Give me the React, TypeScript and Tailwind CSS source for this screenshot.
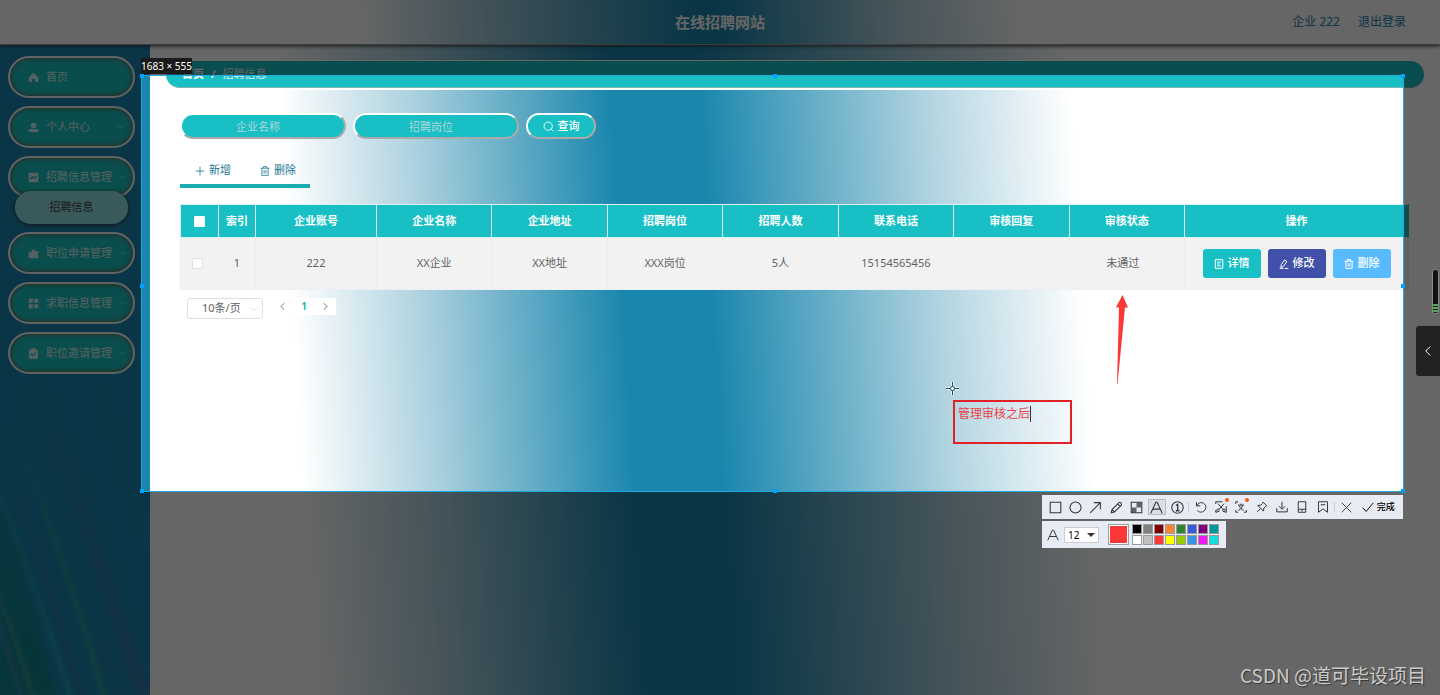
import { useState, type ReactNode } from 'react'

const FONT = "font-['Noto_Sans','Noto_Sans_CJK_SC',sans-serif]"

const icons: Record<string, ReactNode> = {
  home: <path d="M8 1 1 7.500V14.500h5V10h4v4.500h5v-7z" fill="currentColor" />,
  user: (
    <g fill="currentColor">
      <circle cx="8" cy="5" r="4" />
      <path d="M1 14.500v-2.200C1 10.500 2.500 10 4 10h8c1.500 0 3 .5 3 2.300v2.200z" />
    </g>
  ),
  chart: (
    <g>
      <rect x="1" y="1" width="14" height="14" rx="1" fill="currentColor" />
      <path d="m3.500 10 3-3 2.500 2 3.500-3.500" fill="none" stroke="#18a5a5" strokeWidth="1.500" />
    </g>
  ),
  puzzle: <path d="M1 6h4c0-2 1-4 3.500-4S11 3 10.500 5L15 4v4.500c-2 0-2 2.500 0 2.500v4H1z" fill="currentColor" />,
  grid: <path d="M1 1h6v6H1zM9 1h6v6H9zM1 9h6v6H1zM9 9h6v6H9z" fill="currentColor" />,
  claim: (
    <g>
      <path d="M1.500 2.500H5V.5h6v2h3.500v13h-13z" fill="currentColor" />
      <path d="m4.500 8.500 2.500 2.500 4.500-4.500" fill="none" stroke="#18a5a5" strokeWidth="1.500" />
    </g>
  ),
  down: <path d="m2 5 6 6 6-6" />,
  left: <path d="M11 2 5 8l6 6" />,
  right: <path d="m5 2 6 6-6 6" />,
  plus: <path d="M8 1v14M1 8h14" />,
  trash: <path d="M1 3.500h14M5.500 3.500V1h5v2.500M3 3.500V15h10V3.500M6.500 6.500V12M9.500 6.500V12" />,
  search: (
    <g>
      <circle cx="7.500" cy="7.500" r="6" />
      <path d="m12 12 3 3" />
    </g>
  ),
  doc: <path d="M2 1h12v14H2zM5 5h6M5 8h4M5 11h6" />,
  edit: <path d="M9 1.500 12.500 4 7 12l-4 1.500.5-4.500zM1 15h6M9 15h6" />,
  square: <path d="M1.500 1.500h13v13h-13z" />,
  circle: <circle cx="8" cy="8" r="6.800" />,
  arrow: <path d="M1.500 14.500 14 2M6 2h8v8" />,
  pencil: <path d="m1.500 14.500 1-4L11 2q1.500-1 2.500.5t.5 2.500L5.500 13.500zM9.500 3.500l3 3M2.500 10.500l3 3" />,
  mosaic: (
    <g>
      <path d="M1.500 1.500h13v13h-13z" />
      <path d="M8 2h6v6H8zM2 8h6v6H2z" fill="currentColor" stroke="none" opacity=".75" />
    </g>
  ),
  letter: <path d="M1 15 7.200 1.500h1.600L15 15M3.800 10h8.400" />,
  number: (
    <g>
      <circle cx="8" cy="8" r="7" />
      <path d="M6 5.500 8.200 4.200V12M6 12h4.500" strokeWidth="1.600" />
    </g>
  ),
  undo: <path d="M2 1.500v5h5M2.500 6.500C5-.5 14.500 1.500 14.500 8.500c0 6-8 8.500-11.500 4" />,
  cut: (
    <g>
      <path d="M1 4V1h9M1 12v3h2M13 15h2V7M4 3.500l7 8M12 3.500l-7 8" />
      <circle cx="4" cy="12.500" r="1.700" />
      <circle cx="12" cy="12.500" r="1.700" />
    </g>
  ),
  translate: <path d="M1 4V1h3M1 12v3h3M15 12v3h-3M4 5.500h8M8 3.500v2M4.500 12.500c4-2 5-4 5.500-7M6 6.500c.5 3 3 5 5.500 6" />,
  pin: <path d="m9.500 1.500 5 5-1.500.5-2.500 2.500-.5 4-7.500-7.500 4-.5L9 3zM6 10l-4.500 4.500" />,
  download: <path d="M8 1v9.500M4 7l4 4 4-4M1 9.500v5h14v-5" />,
  phone: <path d="M3 1h10v14H3zM3 11h10M7 13h2" />,
  bookmark: <path d="M2 1h12v14l-6-4.500L2 15zM5 5h6" />,
  close: <path d="m1 1 14 14M15 1 1 15" />,
  check: <path d="m1 9 4.500 5L15 2.500" />,
}

const solidIcons = ['home', 'user', 'chart', 'puzzle', 'grid', 'claim']

function Icon({ name, className = 'size-[11px]', width = 1.3 }: { name: string; className?: string; width?: number }) {
  return (
    <svg
      viewBox="0 0 16 16"
      className={`shrink-0 ${className}`}
      fill="none"
      stroke={solidIcons.includes(name) ? 'none' : 'currentColor'}
      strokeWidth={width}
      aria-hidden="true"
    >
      {icons[name]}
    </svg>
  )
}

const menu = [
  { icon: 'home', label: '首页' },
  { icon: 'user', label: '个人中心', more: true },
  { icon: 'chart', label: '招聘信息管理', more: true, child: '招聘信息' },
  { icon: 'puzzle', label: '职位申请管理', more: true },
  { icon: 'grid', label: '求职信息管理', more: true },
  { icon: 'claim', label: '职位邀请管理', more: true },
]

const columns = ['企业账号', '企业名称', '企业地址', '招聘岗位', '招聘人数', '联系电话', '审核回复', '审核状态']
const row = ['222', 'XX企业', 'XX地址', 'XXX岗位', '5人', '15154565456', '', '未通过']

const actions = [
  { icon: 'doc', label: '详情', color: 'bg-[#18c0c5]' },
  { icon: 'edit', label: '修改', color: 'bg-[#4150a8]' },
  { icon: 'trash', label: '删除', color: 'bg-[#58bbff]' },
]

const drawTools = ['square', 'circle', 'arrow', 'pencil', 'mosaic', 'letter', 'number']
const captureTools = ['undo', 'cut', 'translate', 'pin', 'download', 'phone', 'bookmark']

const swatches = [
  'bg-[#000000]', 'bg-[#808080]', 'bg-[#800000]', 'bg-[#f78837]', 'bg-[#2f8432]', 'bg-[#385bd3]', 'bg-[#800080]', 'bg-[#009899]',
  'bg-[#ffffff]', 'bg-[#c0c0c0]', 'bg-[#fb3838]', 'bg-[#ffff00]', 'bg-[#99cc00]', 'bg-[#3794e4]', 'bg-[#f31bf3]', 'bg-[#16dcdc]',
]

const handles = [
  '-left-0.5 -top-0.5', 'left-1/2 -top-0.5', '-right-0.5 -top-0.5',
  '-left-0.5 top-1/2', '-right-0.5 top-1/2',
  '-left-0.5 -bottom-0.5', 'left-1/2 -bottom-0.5', '-right-0.5 -bottom-0.5',
]

const pill = 'h-[26px] rounded-full border-2 border-t-white border-l-white border-r-[#aaaaaa] border-b-[#aaaaaa] bg-[#18c0c5] text-[11px]'

function Header() {
  return (
    <header className="relative z-10 grid h-[45px] shrink-0 grid-cols-3 items-center border-b border-[#999999] bg-[linear-gradient(86.500deg,#fff_25%,#b0d3e0_32%,#1986ad_48%,#1986ad_50%,#b0d3e0_62%,#fff_71%)] px-[34px] shadow-[0_1px_4px_#333]">
      <h1 className="col-start-2 text-center text-[15px] font-bold text-white">在线招聘网站</h1>
      <div className="flex justify-end gap-[18px] text-[12px] text-[#2585b4]">
        <span>企业 222</span>
        <a href="#logout">退出登录</a>
      </div>
    </header>
  )
}

function Streaks() {
  return (
    <svg className="absolute inset-x-0 bottom-0 h-[330px] w-full" viewBox="0 0 150 330" preserveAspectRatio="none" fill="none" aria-hidden="true">
      <defs>
        <filter id="soft" x="-20%" y="-20%" width="140%" height="140%">
          <feGaussianBlur stdDeviation="2" />
        </filter>
        <linearGradient id="fade" x1="0" y1="0" x2="0" y2="330" gradientUnits="userSpaceOnUse">
          <stop offset="0" stopColor="#fff" stopOpacity="0" />
          <stop offset="1" stopColor="#fff" />
        </linearGradient>
        <mask id="fadeMask">
          <rect width="150" height="330" fill="url(#fade)" />
        </mask>
      </defs>
      <g mask="url(#fadeMask)" filter="url(#soft)">
        <path d="M0 100Q25 220 55 330H0z" fill="#0f8589" />
        <path d="M0 130Q35 220 72 335" stroke="#23a0a8" strokeWidth="5" />
        <path d="M-5 60Q40 190 82 335" stroke="#357aa8" strokeWidth="5" />
        <path d="M15 70Q65 190 105 335" stroke="#2b9c98" strokeWidth="6" />
        <path d="M25 50Q75 190 118 335" stroke="#3d7da5" strokeWidth="2" />
        <path d="M35 20Q95 180 145 335" stroke="#3c76a2" strokeWidth="16" opacity=".7" />
        <path d="M100 20Q125 110 155 190" stroke="#278ca5" strokeWidth="2" />
        <path d="M-5 220Q15 270 34 335" stroke="#51a58b" strokeWidth="2" />
        <path d="M-5 250Q10 290 22 335" stroke="#3c80b0" strokeWidth="4" />
      </g>
    </svg>
  )
}

function Sidebar() {
  return (
    <aside className="relative w-[150px] shrink-0 bg-[#1986ae] px-2 pt-[11px]">
      <Streaks />
      <nav className="relative flex flex-col gap-2 pr-[7px]">
        {menu.map((item) => (
          <div key={item.label}>
            <button className="flex h-[42px] w-full items-center gap-[7px] rounded-full border-2 border-[#f5f5f5] bg-[#18c0bd] pl-[18px] pr-2 text-[11px] text-white/80 shadow-[inset_0_0_4px_1px_#6d6c64]">
              <Icon name={item.icon} />
              <span className="flex-1 text-left whitespace-nowrap">{item.label}</span>
              {item.more && <Icon name="down" className="size-2" />}
            </button>
            {item.child && (
              <a href="#jobs" className="relative mx-[7px] -mt-[7px] flex h-[33px] items-center justify-center rounded-[16px] bg-[#8fdfe0] text-[11px] text-[#444444] shadow-[0_1px_4px_#333]">
                {item.child}
              </a>
            )}
          </div>
        ))}
      </nav>
    </aside>
  )
}

function Filters() {
  return (
    <form className="flex items-center gap-[7px]" onSubmit={(e) => e.preventDefault()}>
      <input aria-label="企业名称" placeholder="企业名称" className={`${pill} w-[166px] pr-[22px] pl-3 text-center placeholder:text-[#b3d6d8]`} />
      <input aria-label="招聘岗位" placeholder="招聘岗位" className={`${pill} w-[166px] pr-[22px] pl-3 text-center placeholder:text-[#b3d6d8]`} />
      <button className={`${pill} flex w-[70px] items-center justify-center gap-1 font-medium text-white`}>
        <Icon name="search" />
        查询
      </button>
    </form>
  )
}

function JobTable() {
  const [selected, setSelected] = useState(false)
  const box = 'block mx-auto size-[11px] appearance-none rounded-[1px] border bg-white checked:bg-[#409eff]'

  return (
    <table className="w-full table-fixed border-collapse text-[11px]">
      <colgroup>
        <col className="w-[38px]" />
        <col className="w-[37px]" />
        <col className="w-[121px]" />
        {columns.slice(1).map((c) => <col key={c} />)}
        <col className="w-[224px]" />
      </colgroup>
      <thead>
        <tr className="h-[33px] bg-[#18c0c5] text-white">
          <th className="border border-[#d9f3f4]">
            <input type="checkbox" aria-label="全选" className={`${box} border-white`} checked={selected} onChange={() => setSelected(!selected)} />
          </th>
          {['索引', ...columns, '操作'].map((c) => (
            <th key={c} className="border border-[#d9f3f4] p-0 font-bold last:border-r-[#18c0c5]">{c}</th>
          ))}
        </tr>
      </thead>
      <tbody>
        <tr className="h-[52px] bg-[#f2f2f2] text-center text-[#606266]">
          <td className="border border-[#ebeef5] pr-1">
            <input type="checkbox" aria-label="选择第1行" className={`${box} border-[#dcdfe6]`} checked={selected} onChange={() => setSelected(!selected)} />
          </td>
          <td className="border border-[#ebeef5]">1</td>
          {row.map((value, i) => (
            <td key={i} className="border border-[#ebeef5] nth-[10]:pr-2">{value}</td>
          ))}
          <td className="border border-[#ebeef5]">
            <div className="flex justify-center gap-[7px]">
              {actions.map((a) => (
                <button key={a.label} className={`flex h-[29px] w-[58px] items-center justify-center gap-1 rounded-[3px] font-medium text-white ${a.color}`}>
                  <Icon name={a.icon} className="size-[10px]" width={1.6} />
                  {a.label}
                </button>
              ))}
            </div>
          </td>
        </tr>
      </tbody>
    </table>
  )
}

function Pagination() {
  return (
    <div className="mt-2 ml-[7px] flex items-start">
      <div className="relative">
        <select aria-label="每页条数" className="block h-[21px] w-[76px] appearance-none rounded-[3px] border border-[#dcdfe6] bg-white pl-[14px] text-[11px] text-[#606266]">
          <option>10条/页</option>
        </select>
        <Icon name="down" className="pointer-events-none absolute top-[7px] right-[5px] size-2 text-[#c0c4cc]" />
      </div>
      <div className="ml-2 flex h-[17px] items-center text-[#a8abb2]">
        <button aria-label="上一页" className="flex h-full w-[22px] items-center justify-center bg-white"><Icon name="left" className="size-[9px]" width={2} /></button>
        <button className="h-full w-[22px] bg-white text-[10px] font-bold text-[#18bfae]">1</button>
        <button aria-label="下一页" className="flex h-full w-[21px] items-center justify-center bg-white"><Icon name="right" className="size-[9px]" width={2} /></button>
      </div>
    </div>
  )
}

function Capture() {
  const [tool, setTool] = useState('letter')
  const [color, setColor] = useState('bg-[#fb3838]')
  const toolButton = 'relative flex h-4 w-[18px] items-center justify-center border'

  return (
    <div className="absolute top-[75px] right-9 left-[141px] z-20 h-[417px] border border-[#1fa9e0] shadow-[0_0_0_2000px_rgba(0,0,0,0.6)]">
      {handles.map((h) => <i key={h} className={`absolute size-1 bg-[#00a2ff] ${h}`} />)}

      <div className="absolute -top-[18px] -left-px h-4 bg-[#1b1b1b] text-[10px] leading-4 whitespace-nowrap text-white">1683 × 555</div>

      <svg className="absolute top-[219px] right-[275px] h-[90px] w-3" viewBox="0 0 12 90" aria-hidden="true">
        <path d="M6.500 0 12 12.500H9L1.500 89 1 89 3 12.500H0z" fill="#fb3838" />
      </svg>
      <svg className="absolute top-[306px] right-[444px] size-[13px]" viewBox="0 0 13 13" fill="none" aria-hidden="true">
        <path d="M6.500 0v4M6.500 9v4M0 6.500h4M9 6.500h4" stroke="#fff" strokeWidth="3" opacity=".7" />
        <path d="M6.500 0v4M6.500 9v4M0 6.500h4M9 6.500h4" stroke="#1d4a5c" />
        <circle cx="6.500" cy="6.500" r="2" fill="#fff" stroke="#1d4a5c" />
      </svg>

      <div className="absolute top-[324px] right-[331px] flex h-[44px] w-[119px] items-start border-2 border-[#e02128] px-[3px] pt-1 text-[12px] leading-4 text-[#ec4349]">
        管理审核之后
        <i className="h-4 w-px bg-[#333333]" />
      </div>

      <div className="absolute top-[419px] right-0 flex flex-col items-start gap-0.5 text-[#30343f]">
        <div className="flex h-6 w-[361px] items-center justify-between bg-[#e7ebf4] pr-2 pl-1">
          {drawTools.map((t) => (
            <button key={t} aria-label={t} onClick={() => setTool(t)} className={`${toolButton} ${tool === t ? 'border-[#b9bbc1] bg-[#dcdee3]' : 'border-transparent'}`}>
              <Icon name={t} className="size-[13px]" />
            </button>
          ))}
          <i className="h-[10px] w-px bg-[#c9ccd5]" />
          {captureTools.map((t) => (
            <button key={t} aria-label={t} className={`${toolButton} border-transparent`}>
              <Icon name={t} className="size-3" />
              {(t === 'cut' || t === 'translate') && <i className="absolute -top-0.5 right-0 size-1 rounded-full bg-[#f25a13]" />}
            </button>
          ))}
          <i className="h-[10px] w-px bg-[#c9ccd5]" />
          <button aria-label="close" className={`${toolButton} border-transparent`}>
            <Icon name="close" />
          </button>
          <button className="flex items-center gap-[3px] pl-1 text-[9px] font-medium whitespace-nowrap text-black">
            <Icon name="check" className="size-3" />
            完成
          </button>
        </div>

        <div className="flex h-[27px] w-[184px] items-center bg-[#e7ebf4] pl-[5px]">
          <Icon name="letter" className="size-3" />
          <div className="relative ml-[5px]">
            <select aria-label="字号" className="block h-4 w-[35px] appearance-none border border-[#c9ccd5] bg-white pl-[3px] text-[10px] leading-[14px] text-black">
              <option>12</option>
            </select>
            <i className="pointer-events-none absolute top-[6px] right-[4px] border-x-4 border-t-4 border-x-transparent border-t-[#333333]" />
          </div>
          <span className={`ml-[9px] size-[21px] border border-[#a0a0a0] ring-1 ring-white ring-inset ${color}`} />
          <div className="ml-[3px] grid grid-cols-8 gap-px">
            {swatches.map((s) => (
              <button key={s} aria-label="颜色" onClick={() => setColor(s)} className={`size-[10px] border border-[#9a9a9a] ${s}`} />
            ))}
          </div>
        </div>
      </div>
    </div>
  )
}

export default function App() {
  return (
    <div className={`relative flex min-h-screen flex-col overflow-hidden bg-white ${FONT}`}>
      <Header />
      <div className="flex flex-1">
        <Sidebar />
        <main className="min-w-0 flex-1 bg-[linear-gradient(86.500deg,#fff_12.500%,#b0d3e0_22%,#1986ad_37.500%,#1986ad_44%,#b0d3e0_61%,#fff_72%)] pt-4">
          <div className="mx-4 flex h-[27px] items-center gap-[7px] rounded-full border-b border-[#7fb5b5] bg-[#18c0c5] px-4 text-[11px] text-white shadow-[0_-1px_0_#fff,0_2px_0_#fff]">
            <a href="#home" className="font-bold">首页</a>
            <span className="font-bold">/</span>
            <span className="text-white/85">招聘信息</span>
          </div>
          <div className="pt-[25px] pr-[31px] pl-[30px]">
            <Filters />
            <div className="my-4 flex h-[33px] w-fit items-center border-b-4 border-[#1aabae] pt-0.5 text-[11px] text-[#1d7894]">
              <button className="flex items-center gap-1 pr-[14px] pl-[15px]"><Icon name="plus" className="size-[10px]" />新增</button>
              <button className="flex items-center gap-1 pr-[14px] pl-[15px]"><Icon name="trash" className="size-[10px]" />删除</button>
            </div>
            <JobTable />
            <Pagination />
          </div>
        </main>
      </div>

      <Capture />

      <div className="absolute top-[269px] right-px z-30 flex h-[45px] w-[7px] flex-col justify-end gap-px rounded-[3px] border border-[#888888] bg-[#111111] pb-px">
        <i className="h-0.5 bg-[#4fae55]" />
        <i className="h-0.5 bg-[#4fae55]" />
        <i className="h-0.5 bg-[#4fae55]" />
      </div>
      <button aria-label="展开" className="absolute top-[326px] right-0 z-30 flex h-[50px] w-6 items-center justify-center rounded-l-[3px] bg-[#222222] text-white">
        <Icon name="left" className="size-3" />
      </button>
      <div className="absolute right-[14px] bottom-[6px] z-30 font-['Noto_Sans_CJK_SC',sans-serif] text-[19px] leading-7 text-[#cccccc] [text-shadow:1px_1px_1px_#333]">
        CSDN @道可毕设项目
      </div>
    </div>
  )
}
